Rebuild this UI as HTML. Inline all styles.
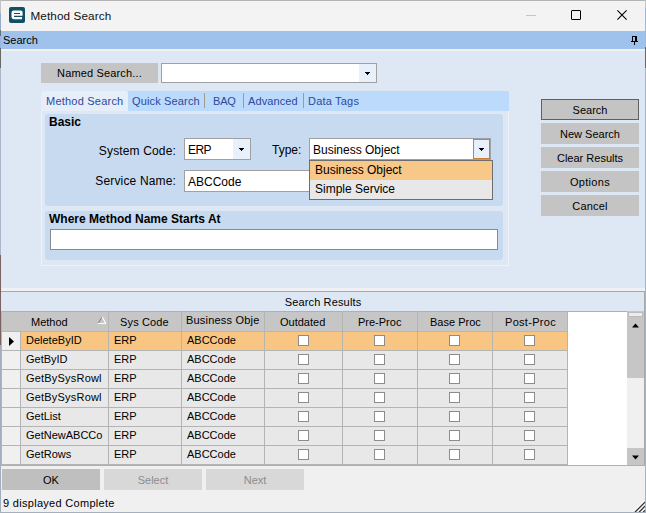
<!DOCTYPE html>
<html><head><meta charset="utf-8">
<style>
*{margin:0;padding:0;box-sizing:border-box}
html,body{width:646px;height:513px;overflow:hidden;background:#dde8f4;font-family:"Liberation Sans",sans-serif;font-size:11px;color:#000}
.a{position:absolute}
.t{position:absolute;white-space:nowrap}
svg{position:absolute;display:block}
</style></head><body>
<div class="a" style="left:0px;top:0px;width:646px;height:31px;background:#f3f3f3;"></div>
<div class="a" style="left:9px;top:7px;width:16px;height:16px;background:#0f5063;border-radius:2px"></div>
<svg style="left:9px;top:7px" width="16" height="16" viewBox="0 0 16 16"><path fill-rule="evenodd" fill="#fff" d="M4.6 3.4H11.7Q13.6 3.4 13.6 5.3V8.7H5V10H13.1V12.2H4.6Q2.5 12.2 2.5 10.1V5.5Q2.5 3.4 4.6 3.4ZM5 6H11V7H5Z"/></svg>
<div class="t" style="left:30.5px;top:9px;font-size:11.7px;line-height:13.7px;color:#111;letter-spacing:0.12px;">Method Search</div>
<div class="a" style="left:526px;top:15px;width:10px;height:1px;background:#c4c4c4;"></div>
<div class="a" style="left:571px;top:10px;width:10px;height:10px;border:1px solid #000;border-radius:1px"></div>
<svg style="left:616px;top:9px" width="12" height="12" viewBox="0 0 12 12"><path d="M1.4 1.4L10.6 10.6M10.6 1.4L1.4 10.6" stroke="#000" stroke-width="1.1"/></svg>
<div class="a" style="left:0px;top:31px;width:646px;height:18px;background:#9ec2ec;"></div>
<div class="t" style="left:3px;top:33.5px;font-size:11px;line-height:13px;">Search</div>
<svg style="left:630px;top:35px" width="10" height="11" viewBox="0 0 10 11" shape-rendering="crispEdges"><g fill="#000"><rect x="2" y="1" width="5" height="1"/><rect x="2" y="1" width="1" height="5"/><rect x="5" y="1" width="2" height="5"/><rect x="1" y="6" width="7" height="1"/><rect x="4" y="7" width="1" height="3"/></g></svg>
<div class="a" style="left:0px;top:49px;width:646px;height:2px;background:#f2f1ef;"></div>
<div class="a" style="left:41px;top:63px;width:117px;height:20px;background:#c4c4c4;"></div>
<div class="t" style="left:41px;top:67px;font-size:11px;line-height:13px;letter-spacing:0.15px;width:117px;text-align:center;">Named Search...</div>
<div class="a" style="left:161px;top:63px;width:216px;height:20px;background:#fff;border:1px solid #a0a0a0;"></div>
<div class="a" style="left:359px;top:64px;width:17px;height:18px;background:#e8f0fb;"></div>
<div class="a" style="left:365px;top:72px;width:5px;height:1px;background:#000;"></div>
<div class="a" style="left:366px;top:73px;width:3px;height:1px;background:#000;"></div>
<div class="a" style="left:367px;top:74px;width:1px;height:1px;background:#000;"></div>
<div class="a" style="left:41px;top:91px;width:468px;height:20px;background:#bcdafc;"></div>
<div class="a" style="left:41px;top:91px;width:87px;height:20px;background:#e6eef9;border-radius:2px 2px 0 0"></div>
<div class="t" style="left:46px;top:95px;font-size:11px;line-height:13px;color:#2a4a9e;letter-spacing:0.22px;">Method Search</div>
<div class="t" style="left:132px;top:95px;font-size:11px;line-height:13px;color:#2a4a9e;letter-spacing:0.15px;">Quick Search</div>
<div class="a" style="left:204px;top:93px;width:1px;height:15px;background:#a49a8a;"></div>
<div class="t" style="left:213px;top:95px;font-size:11px;line-height:13px;color:#2a4a9e;letter-spacing:-0.2px;">BAQ</div>
<div class="a" style="left:243px;top:93px;width:1px;height:15px;background:#a49a8a;"></div>
<div class="t" style="left:248px;top:95px;font-size:11px;line-height:13px;color:#2a4a9e;letter-spacing:0.1px;">Advanced</div>
<div class="a" style="left:303px;top:93px;width:1px;height:15px;background:#a49a8a;"></div>
<div class="t" style="left:308px;top:95px;font-size:11px;line-height:13px;color:#2a4a9e;letter-spacing:0.2px;">Data Tags</div>
<div class="a" style="left:41px;top:111px;width:468px;height:155px;border:1px solid #eef2f8;border-top:none"></div>
<div class="a" style="left:45px;top:114px;width:458px;height:92px;background:#c8daf0;border-radius:3px"></div>
<div class="t" style="left:49px;top:115px;font-size:12px;line-height:14px;font-weight:bold;">Basic</div>
<div class="t" style="left:40px;top:144px;font-size:12px;line-height:14px;letter-spacing:0.15px;width:136px;text-align:right;">System Code:</div>
<div class="t" style="left:40px;top:174px;font-size:12px;line-height:14px;letter-spacing:0.15px;width:136px;text-align:right;">Service Name:</div>
<div class="a" style="left:184px;top:138px;width:67px;height:22px;background:#fff;border:1px solid #a0a0a0;"></div>
<div class="a" style="left:233px;top:139px;width:17px;height:20px;background:#e8f0fb;"></div>
<div class="a" style="left:239px;top:148px;width:5px;height:1px;background:#000;"></div>
<div class="a" style="left:240px;top:149px;width:3px;height:1px;background:#000;"></div>
<div class="a" style="left:241px;top:150px;width:1px;height:1px;background:#000;"></div>
<div class="t" style="left:188px;top:143px;font-size:12px;line-height:14px;letter-spacing:-0.6px;">ERP</div>
<div class="t" style="left:272px;top:143px;font-size:12px;line-height:14px;">Type:</div>
<div class="a" style="left:184px;top:170px;width:130px;height:22px;background:#fff;border:1px solid #a0a0a0;"></div>
<div class="t" style="left:188px;top:175px;font-size:12px;line-height:14px;">ABCCode</div>
<div class="a" style="left:309px;top:138px;width:182px;height:22px;background:#fff;border:1px solid #a0a0a0;"></div>
<div class="a" style="left:473px;top:139px;width:17px;height:20px;background:#e8f0fb;border:1px solid #cc8033;"></div>
<div class="a" style="left:479px;top:148px;width:5px;height:1px;background:#000;"></div>
<div class="a" style="left:480px;top:149px;width:3px;height:1px;background:#000;"></div>
<div class="a" style="left:481px;top:150px;width:1px;height:1px;background:#000;"></div>
<div class="t" style="left:313px;top:143px;font-size:12px;line-height:14px;">Business Object</div>
<div class="a" style="left:309px;top:160px;width:184px;height:40px;background:#e8e8e8;border:1px solid #6e6e6e;"></div>
<div class="a" style="left:310px;top:161px;width:182px;height:19px;background:#f8c888;"></div>
<div class="t" style="left:315px;top:163px;font-size:12px;line-height:14px;">Business Object</div>
<div class="t" style="left:315px;top:182px;font-size:12px;line-height:14px;">Simple Service</div>
<div class="a" style="left:45px;top:211px;width:458px;height:49px;background:#c8daf0;border-radius:3px"></div>
<div class="t" style="left:49px;top:212px;font-size:12px;line-height:14px;font-weight:bold;">Where Method Name Starts At</div>
<div class="a" style="left:50px;top:229px;width:448px;height:21px;background:#fff;border:1px solid #8a8a8a;"></div>
<div class="a" style="left:541px;top:99px;width:98px;height:21px;background:#c4c4c4;border:1px solid #606060;"></div>
<div class="t" style="left:541px;top:104px;font-size:11px;line-height:13px;letter-spacing:0px;width:98px;text-align:center;">Search</div>
<div class="a" style="left:541px;top:123px;width:98px;height:21px;background:#c4c4c4;"></div>
<div class="t" style="left:541px;top:128px;font-size:11px;line-height:13px;letter-spacing:0px;width:98px;text-align:center;">New Search</div>
<div class="a" style="left:541px;top:147px;width:98px;height:21px;background:#c4c4c4;"></div>
<div class="t" style="left:541px;top:152px;font-size:11px;line-height:13px;letter-spacing:0px;width:98px;text-align:center;">Clear Results</div>
<div class="a" style="left:541px;top:171px;width:98px;height:21px;background:#c4c4c4;"></div>
<div class="t" style="left:541px;top:176px;font-size:11px;line-height:13px;letter-spacing:0.3px;width:98px;text-align:center;">Options</div>
<div class="a" style="left:541px;top:195px;width:98px;height:21px;background:#c4c4c4;"></div>
<div class="t" style="left:541px;top:200px;font-size:11px;line-height:13px;letter-spacing:0.2px;width:98px;text-align:center;">Cancel</div>
<div class="a" style="left:0px;top:288px;width:646px;height:3px;background:#eff1f4;"></div>
<div class="a" style="left:0px;top:291px;width:646px;height:1px;background:#a8a8a8;"></div>
<div class="a" style="left:0px;top:292px;width:644px;height:19px;background:#dde8f4;"></div>
<div class="a" style="left:644px;top:291px;width:1px;height:174px;background:#a8a8a8;"></div>
<div class="t" style="left:1px;top:296px;font-size:11px;line-height:13px;letter-spacing:0.15px;width:644px;text-align:center;">Search Results</div>
<div class="a" style="left:1px;top:311px;width:643px;height:154px;background:#fff;"></div>
<div class="a" style="left:1px;top:311px;width:567px;height:20px;background:#c6c6c6;"></div>
<div class="a" style="left:1px;top:331px;width:567px;height:133px;background:#e8e8e8;"></div>
<div class="a" style="left:1px;top:331px;width:19px;height:133px;background:#f0f0f0;"></div>
<div class="a" style="left:21px;top:332px;width:546px;height:18px;background:#f8c682;"></div>
<div class="a" style="left:1px;top:331px;width:567px;height:1px;background:#b8b8b8;"></div>
<div class="a" style="left:1px;top:311px;width:643px;height:1px;background:#b0b0b0;"></div>
<div class="a" style="left:1px;top:350px;width:567px;height:1px;background:#b4b4b4;"></div>
<div class="a" style="left:1px;top:369px;width:567px;height:1px;background:#b4b4b4;"></div>
<div class="a" style="left:1px;top:388px;width:567px;height:1px;background:#b4b4b4;"></div>
<div class="a" style="left:1px;top:407px;width:567px;height:1px;background:#b4b4b4;"></div>
<div class="a" style="left:1px;top:426px;width:567px;height:1px;background:#b4b4b4;"></div>
<div class="a" style="left:1px;top:445px;width:567px;height:1px;background:#b4b4b4;"></div>
<div class="a" style="left:1px;top:464px;width:567px;height:1px;background:#b4b4b4;"></div>
<div class="a" style="left:20px;top:331px;width:1px;height:134px;background:#b4b4b4;"></div>
<div class="a" style="left:108px;top:311px;width:1px;height:154px;background:#b4b4b4;"></div>
<div class="a" style="left:181px;top:311px;width:1px;height:154px;background:#b4b4b4;"></div>
<div class="a" style="left:264px;top:311px;width:1px;height:154px;background:#b4b4b4;"></div>
<div class="a" style="left:342px;top:311px;width:1px;height:154px;background:#b4b4b4;"></div>
<div class="a" style="left:417px;top:311px;width:1px;height:154px;background:#b4b4b4;"></div>
<div class="a" style="left:492px;top:311px;width:1px;height:154px;background:#b4b4b4;"></div>
<div class="a" style="left:567px;top:311px;width:1px;height:154px;background:#b4b4b4;"></div>
<div class="a" style="left:1px;top:311px;width:1px;height:154px;background:#b4b4b4;"></div>
<div class="t" style="left:31px;top:316px;font-size:11px;line-height:13px;letter-spacing:0px;">Method</div>
<div class="t" style="left:120px;top:316px;font-size:11px;line-height:13px;letter-spacing:0.15px;">Sys Code</div>
<div class="t" style="left:186px;top:314px;font-size:11px;line-height:13px;letter-spacing:0.2px;">Business Obje</div>
<div class="t" style="left:280px;top:316px;font-size:11px;line-height:13px;letter-spacing:0px;">Outdated</div>
<div class="t" style="left:358px;top:316px;font-size:11px;line-height:13px;letter-spacing:0px;">Pre-Proc</div>
<div class="t" style="left:430px;top:316px;font-size:11px;line-height:13px;letter-spacing:0px;">Base Proc</div>
<div class="t" style="left:505px;top:316px;font-size:11px;line-height:13px;letter-spacing:0.3px;">Post-Proc</div>
<svg style="left:97px;top:316px" width="10" height="9" viewBox="0 0 10 9"><path d="M4.8 1.2L1.3 7.2" stroke="#8a8a8a" stroke-width="1.1"/><path d="M5.2 1L8.6 7" stroke="#fff" stroke-width="1.2"/><path d="M1 7.5H9" stroke="#fff" stroke-width="1"/></svg>
<svg style="left:9px;top:337px" width="6" height="9" viewBox="0 0 6 9"><path d="M0 0L5 4.5L0 9Z" fill="#000"/></svg>
<div class="t" style="left:26px;top:334px;font-size:11px;line-height:13px;">DeleteByID</div>
<div class="t" style="left:114px;top:334px;font-size:11px;line-height:13px;">ERP</div>
<div class="t" style="left:187px;top:334px;font-size:11px;line-height:13px;">ABCCode</div>
<div class="a" style="left:298px;top:335px;width:11px;height:11px;background:#fff;border:1px solid #8c8c8c;"></div>
<div class="a" style="left:374px;top:335px;width:11px;height:11px;background:#fff;border:1px solid #8c8c8c;"></div>
<div class="a" style="left:449px;top:335px;width:11px;height:11px;background:#fff;border:1px solid #8c8c8c;"></div>
<div class="a" style="left:524px;top:335px;width:11px;height:11px;background:#fff;border:1px solid #8c8c8c;"></div>
<div class="t" style="left:26px;top:353px;font-size:11px;line-height:13px;">GetByID</div>
<div class="t" style="left:114px;top:353px;font-size:11px;line-height:13px;">ERP</div>
<div class="t" style="left:187px;top:353px;font-size:11px;line-height:13px;">ABCCode</div>
<div class="a" style="left:298px;top:354px;width:11px;height:11px;background:#fff;border:1px solid #8c8c8c;"></div>
<div class="a" style="left:374px;top:354px;width:11px;height:11px;background:#fff;border:1px solid #8c8c8c;"></div>
<div class="a" style="left:449px;top:354px;width:11px;height:11px;background:#fff;border:1px solid #8c8c8c;"></div>
<div class="a" style="left:524px;top:354px;width:11px;height:11px;background:#fff;border:1px solid #8c8c8c;"></div>
<div class="t" style="left:26px;top:372px;font-size:11px;line-height:13px;letter-spacing:0.2px;">GetBySysRowl</div>
<div class="t" style="left:114px;top:372px;font-size:11px;line-height:13px;">ERP</div>
<div class="t" style="left:187px;top:372px;font-size:11px;line-height:13px;">ABCCode</div>
<div class="a" style="left:298px;top:373px;width:11px;height:11px;background:#fff;border:1px solid #8c8c8c;"></div>
<div class="a" style="left:374px;top:373px;width:11px;height:11px;background:#fff;border:1px solid #8c8c8c;"></div>
<div class="a" style="left:449px;top:373px;width:11px;height:11px;background:#fff;border:1px solid #8c8c8c;"></div>
<div class="a" style="left:524px;top:373px;width:11px;height:11px;background:#fff;border:1px solid #8c8c8c;"></div>
<div class="t" style="left:26px;top:391px;font-size:11px;line-height:13px;letter-spacing:0.2px;">GetBySysRowl</div>
<div class="t" style="left:114px;top:391px;font-size:11px;line-height:13px;">ERP</div>
<div class="t" style="left:187px;top:391px;font-size:11px;line-height:13px;">ABCCode</div>
<div class="a" style="left:298px;top:392px;width:11px;height:11px;background:#fff;border:1px solid #8c8c8c;"></div>
<div class="a" style="left:374px;top:392px;width:11px;height:11px;background:#fff;border:1px solid #8c8c8c;"></div>
<div class="a" style="left:449px;top:392px;width:11px;height:11px;background:#fff;border:1px solid #8c8c8c;"></div>
<div class="a" style="left:524px;top:392px;width:11px;height:11px;background:#fff;border:1px solid #8c8c8c;"></div>
<div class="t" style="left:26px;top:410px;font-size:11px;line-height:13px;">GetList</div>
<div class="t" style="left:114px;top:410px;font-size:11px;line-height:13px;">ERP</div>
<div class="t" style="left:187px;top:410px;font-size:11px;line-height:13px;">ABCCode</div>
<div class="a" style="left:298px;top:411px;width:11px;height:11px;background:#fff;border:1px solid #8c8c8c;"></div>
<div class="a" style="left:374px;top:411px;width:11px;height:11px;background:#fff;border:1px solid #8c8c8c;"></div>
<div class="a" style="left:449px;top:411px;width:11px;height:11px;background:#fff;border:1px solid #8c8c8c;"></div>
<div class="a" style="left:524px;top:411px;width:11px;height:11px;background:#fff;border:1px solid #8c8c8c;"></div>
<div class="t" style="left:26px;top:429px;font-size:11px;line-height:13px;">GetNewABCCo</div>
<div class="t" style="left:114px;top:429px;font-size:11px;line-height:13px;">ERP</div>
<div class="t" style="left:187px;top:429px;font-size:11px;line-height:13px;">ABCCode</div>
<div class="a" style="left:298px;top:430px;width:11px;height:11px;background:#fff;border:1px solid #8c8c8c;"></div>
<div class="a" style="left:374px;top:430px;width:11px;height:11px;background:#fff;border:1px solid #8c8c8c;"></div>
<div class="a" style="left:449px;top:430px;width:11px;height:11px;background:#fff;border:1px solid #8c8c8c;"></div>
<div class="a" style="left:524px;top:430px;width:11px;height:11px;background:#fff;border:1px solid #8c8c8c;"></div>
<div class="t" style="left:26px;top:448px;font-size:11px;line-height:13px;">GetRows</div>
<div class="t" style="left:114px;top:448px;font-size:11px;line-height:13px;">ERP</div>
<div class="t" style="left:187px;top:448px;font-size:11px;line-height:13px;">ABCCode</div>
<div class="a" style="left:298px;top:449px;width:11px;height:11px;background:#fff;border:1px solid #8c8c8c;"></div>
<div class="a" style="left:374px;top:449px;width:11px;height:11px;background:#fff;border:1px solid #8c8c8c;"></div>
<div class="a" style="left:449px;top:449px;width:11px;height:11px;background:#fff;border:1px solid #8c8c8c;"></div>
<div class="a" style="left:524px;top:449px;width:11px;height:11px;background:#fff;border:1px solid #8c8c8c;"></div>
<div class="a" style="left:627px;top:311px;width:17px;height:154px;background:#f0f0f0;"></div>
<div class="a" style="left:627px;top:311px;width:17px;height:67px;background:#c6c6c6;"></div>
<div class="a" style="left:628px;top:312px;width:15px;height:5px;background:#ececec;border:1px solid #bcbcbc;"></div>
<svg style="left:632px;top:323px" width="7" height="5" viewBox="0 0 7 5"><path d="M3.5 0.5L7 4.5H0Z" fill="#000"/></svg>
<div class="a" style="left:627px;top:448px;width:17px;height:17px;background:#c6c6c6;"></div>
<svg style="left:632px;top:455px" width="7" height="5" viewBox="0 0 7 5"><path d="M0 0.5H7L3.5 4.5Z" fill="#000"/></svg>
<div class="a" style="left:1px;top:465px;width:644px;height:47px;background:#f0f0f0;"></div>
<div class="a" style="left:1px;top:465px;width:644px;height:1px;background:#b0b0b0;"></div>
<div class="a" style="left:2px;top:469px;width:98px;height:21px;background:#bfbfbf;"></div>
<div class="t" style="left:2px;top:474px;font-size:11px;line-height:13px;width:98px;text-align:center;">OK</div>
<div class="a" style="left:104px;top:469px;width:98px;height:21px;background:#d8d8d8;"></div>
<div class="t" style="left:104px;top:474px;font-size:11px;line-height:13px;color:#8c8c8c;width:98px;text-align:center;">Select</div>
<div class="a" style="left:206px;top:469px;width:98px;height:21px;background:#d8d8d8;"></div>
<div class="t" style="left:206px;top:474px;font-size:11px;line-height:13px;color:#8c8c8c;width:98px;text-align:center;">Next</div>
<div class="t" style="left:3px;top:497px;font-size:11px;line-height:13px;letter-spacing:0.3px;">9 displayed Complete</div>
<svg style="left:630px;top:496px" width="15" height="16" viewBox="0 0 15 16"><g stroke="#fff" stroke-width="1.1"><path d="M3.8 15.4L15 4.2M7.9 15.4L15 8.3M12 15.4L15 12.4"/></g><g stroke="#333" stroke-width="1.3"><path d="M4.9 16.2L15.2 5.9M9 16.2L15.2 10M13.1 16.2L15.2 14.1"/></g></svg>
<div class="a" style="left:0px;top:0px;width:646px;height:1px;background:#b4b4b4;"></div>
<div class="a" style="left:0px;top:0px;width:1px;height:13px;background:#c4c4c4;"></div>
<div class="a" style="left:0px;top:13px;width:1px;height:17px;background:#94acd0;"></div>
<div class="a" style="left:0px;top:30px;width:1px;height:6px;background:#6a7080;"></div>
<div class="a" style="left:0px;top:36px;width:1px;height:12px;background:#9cb4dc;"></div>
<div class="a" style="left:0px;top:48px;width:1px;height:20px;background:#686868;"></div>
<div class="a" style="left:0px;top:68px;width:1px;height:187px;background:#a8b6c8;"></div>
<div class="a" style="left:0px;top:255px;width:1px;height:90px;background:#7a6262;"></div>
<div class="a" style="left:0px;top:345px;width:1px;height:168px;background:#a2aebc;"></div>
<div class="a" style="left:645px;top:0px;width:1px;height:8px;background:#c4c4c4;"></div>
<div class="a" style="left:645px;top:8px;width:1px;height:39px;background:#a0b8d8;"></div>
<div class="a" style="left:645px;top:47px;width:1px;height:21px;background:#686868;"></div>
<div class="a" style="left:645px;top:68px;width:1px;height:445px;background:#a8b4c2;"></div>
<div class="a" style="left:0px;top:512px;width:646px;height:1px;background:#a4b0be;"></div>
</body></html>
